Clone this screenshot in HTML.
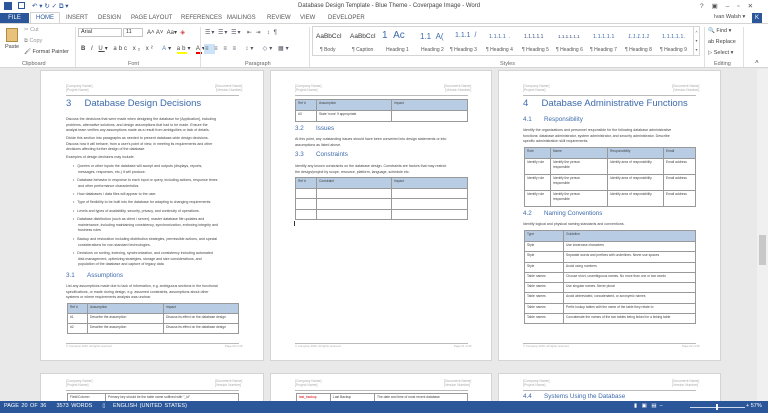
<!DOCTYPE html>
<html><head><meta charset="utf-8"><style>
*{margin:0;padding:0;box-sizing:border-box}
body{width:768px;height:413px;overflow:hidden;position:relative;background:#e9e9e9;font-family:"Liberation Sans",sans-serif;}
.a{position:absolute;white-space:nowrap}
.t{font-size:6.5px;color:#444}
.tab{position:absolute;top:13px;height:10px;font-size:6px;color:#555;line-height:10px}
.lbl{position:absolute;top:61px;font-size:5.5px;color:#666}
.pg{position:absolute;background:#fff;border:1px solid #d4d4d4}
.s{position:absolute;font-size:3.6px;color:#444;white-space:nowrap}
.hd{position:absolute;font-size:3.4px;color:#aaa;white-space:nowrap}
.h1{position:absolute;font-size:9.5px;color:#3d6bab;white-space:nowrap}
.h2{position:absolute;font-size:6.3px;color:#3d6bab;white-space:nowrap}
table{position:absolute;border-collapse:collapse}
td{border:0.7px solid #999;font-size:3.3px;color:#444;padding:1px 2px;vertical-align:top;line-height:4.5px}
tr.h td{background:#b8cce4}
.rule{position:absolute;height:0;border-top:0.7px solid #bbb}
.sep{position:absolute;top:27px;width:1px;height:40px;background:#e0e0e0}
.pv{position:absolute;top:33px;color:#3d6bab;white-space:nowrap}
.sl{position:absolute;top:47px;font-size:5px;color:#555;white-space:nowrap}
</style></head><body>
<div class="a" style="left:0;top:0;width:768px;height:68px;background:#fff;border-bottom:1px solid #d6d6d6"></div>
<div class="a" style="left:4px;top:2px;width:8px;height:8px;background:#2b579a"></div>
<div class="a" style="left:18px;top:2px;width:7px;height:7px;border:1px solid #2b579a"></div>
<div class="a t" style="left:32px;top:2px;color:#2b579a">↶ ▾ ↻ ✓ ⧉ ▾</div>
<div class="a" style="left:298px;top:3px;font-size:6px;color:#444">Database Design Template - Blue Theme - Coverpage Image - Word</div>
<div class="a" style="left:700px;top:2px;font-size:6.5px;color:#555;letter-spacing:8px">?▣–▫✕</div>
<div class="a" style="left:0;top:13px;width:29px;height:10px;background:#2b579a;color:#fff;font-size:6px;text-align:center;line-height:10px">FILE</div>
<div class="a" style="left:30px;top:12px;width:30px;height:12px;border:1px solid #d4d4d4;border-bottom:1px solid #fff;background:#fff;color:#2b579a;font-size:6px;text-align:center;line-height:10px">HOME</div>
<div class="tab" style="left:66px">INSERT</div><div class="tab" style="left:98px">DESIGN</div><div class="tab" style="left:131px">PAGE LAYOUT</div><div class="tab" style="left:181px">REFERENCES</div><div class="tab" style="left:227px">MAILINGS</div><div class="tab" style="left:267px">REVIEW</div><div class="tab" style="left:300px">VIEW</div><div class="tab" style="left:328px">DEVELOPER</div>
<div class="a" style="left:714px;top:14px;font-size:5.5px;color:#444">Ivan Walsh ▾</div>
<div class="a" style="left:752px;top:13px;width:10px;height:10px;background:#2b579a;color:#fff;font-size:6px;text-align:center;line-height:10px">K</div>
<div class="a" style="left:0;top:23px;width:768px;border-top:1px solid #d4d4d4"></div>
<div class="a" style="left:6px;top:28px;width:12px;height:14px;background:#e8c27a;border:1px solid #b08a40"></div>
<div class="a t" style="left:5px;top:44px;font-size:5.5px">Paste</div>
<div class="a t" style="left:24px;top:27px;font-size:5.5px;color:#999">✂ Cut</div>
<div class="a t" style="left:24px;top:38px;font-size:5.5px;color:#999">⧉ Copy</div>
<div class="a t" style="left:24px;top:49px;font-size:5.5px">🖌 Format Painter</div>
<div class="lbl" style="left:22px">Clipboard</div>
<div class="sep" style="left:75px"></div>
<div class="a" style="left:78px;top:28px;width:44px;height:9px;border:1px solid #c6c6c6;font-size:5.5px;padding-left:2px;color:#333">Arial</div>
<div class="a" style="left:123px;top:28px;width:20px;height:9px;border:1px solid #c6c6c6;font-size:5.5px;padding-left:2px;color:#333">11</div>
<div class="a t" style="left:147px;top:29px;font-size:6px">A˄ A˅ &nbsp;Aa▾ &nbsp;<span style="color:#c44">◈</span></div>
<div class="a t" style="left:81px;top:45px;font-size:6px;letter-spacing:2px"><b>B</b> <i>I</i> <u>U</u>▾ abc x₂ x² &nbsp;<span style="color:#4a7fc1">A</span>▾ <span style="border-bottom:2px solid #ff0">ab</span>▾ <span style="border-bottom:2px solid #e00">A</span>▾</div>
<div class="lbl" style="left:128px">Font</div>
<div class="sep" style="left:200px"></div>
<div class="a t" style="left:205px;top:29px;font-size:6px;letter-spacing:1px;color:#556">☰▾ ☰▾ ☰▾ &nbsp;⇤ ⇥ &nbsp;↕ ¶</div>
<div class="a" style="left:204px;top:44px;width:11px;height:10px;background:#cde3f7"></div>
<div class="a t" style="left:205px;top:45px;font-size:6px;letter-spacing:2px;color:#556">≡ ≡ ≡ ≡ &nbsp;↕▾ &nbsp;◇▾ ▦▾</div>
<div class="lbl" style="left:245px">Paragraph</div>
<div class="sep" style="left:309px"></div>
<!-- styles -->
<div class="a" style="left:312px;top:26px;width:388px;height:30px;border:1px solid #d4d4d4;overflow:hidden"></div>
<div class="a" style="left:693px;top:27px;width:6px;height:28px;border-left:1px solid #d4d4d4;font-size:4px;color:#666;line-height:9px;text-align:center">˄<br>▾<br>▾</div>
<div class="pv" style="left:316px;font-size:6.5px;color:#333">AaBbCcI</div><div class="sl" style="left:320px">¶ Body</div>
<div class="pv" style="left:350px;font-size:6.5px;color:#333">AaBbCcI</div><div class="sl" style="left:352px">¶ Caption</div>
<div class="pv" style="left:382px;top:30px;font-size:10px">1 &nbsp;Ac</div><div class="sl" style="left:386px">Heading 1</div>
<div class="pv" style="left:420px;top:32px;font-size:8px">1.1 &nbsp;A(</div><div class="sl" style="left:421px">Heading 2</div>
<div class="pv" style="left:455px;top:32px;font-size:7px">1.1.1 &nbsp;/</div><div class="sl" style="left:450px">¶ Heading 3</div>
<div class="pv" style="left:489px;top:34px;font-size:5.5px">1.1.1.1 &nbsp;.</div><div class="sl" style="left:486px">¶ Heading 4</div>
<div class="pv" style="left:524px;top:34px;font-size:5px;color:#2e4a7a">1.1.1.1.1</div><div class="sl" style="left:522px">¶ Heading 5</div>
<div class="pv" style="left:558px;top:34px;font-size:4.6px;color:#2e4a7a">1.1.1.1.1.1</div><div class="sl" style="left:556px">¶ Heading 6</div>
<div class="pv" style="left:593px;top:34px;font-size:5.5px">1.1.1.1.1</div><div class="sl" style="left:590px">¶ Heading 7</div>
<div class="pv" style="left:628px;top:34px;font-size:5.5px;font-style:italic">1.1.1.1.1</div><div class="sl" style="left:625px">¶ Heading 8</div>
<div class="pv" style="left:662px;top:34px;font-size:5.5px">1.1.1.1.1.</div><div class="sl" style="left:660px">¶ Heading 9</div>
<div class="lbl" style="left:500px">Styles</div>
<div class="sep" style="left:704px"></div>
<div class="a t" style="left:708px;top:28px;font-size:5.5px">🔍 Find ▾</div>
<div class="a t" style="left:708px;top:39px;font-size:5.5px">ab Replace</div>
<div class="a t" style="left:708px;top:50px;font-size:5.5px">▷ Select ▾</div>
<div class="lbl" style="left:714px">Editing</div>
<div class="sep" style="left:743px"></div>
<div class="a t" style="left:755px;top:59px">˄</div>
<div class="a" style="left:757px;top:69px;width:11px;height:332px;background:#f0f0f0"></div>
<div class="a" style="left:759px;top:235px;width:7px;height:30px;background:#c8c8c8"></div>

<!-- PAGE 1 -->
<div class="pg" style="left:40px;top:70px;width:224px;height:291px"></div>
<div class="hd" style="left:66px;top:84px">[Company Name]<br>[Project Name]</div>
<div class="hd" style="left:215px;top:84px;text-align:right">[Document Name]<br>[Version Number]</div>
<div class="rule" style="left:66px;top:95px;width:173px"></div>
<div class="h1" style="left:66px;top:98px">3&nbsp;&nbsp;&nbsp;&nbsp;&nbsp;Database Design Decisions</div>
<div class="s" style="left:66px;top:117px;line-height:5.5px">Discuss the decisions that were made when designing the database for [Application], including<br>problems, alternative solutions, and design assumptions that had to be made. Ensure the<br>analyst team verifies any assumptions made as a result from ambiguities or lack of details.</div>
<div class="s" style="left:66px;top:136px;line-height:5.5px">Divide this section into paragraphs as needed to present database-wide design decisions.<br>Discuss how it will behave, from a user's point of view, in meeting its requirements and other<br>decisions affecting further design of the database.</div>
<div class="s" style="left:66px;top:155px">Examples of design decisions may include:</div>
<div class="s" style="left:73px;top:164px;line-height:5.5px">•&nbsp;&nbsp;&nbsp;Queries or other inputs the database will accept and outputs (displays, reports,<br>&nbsp;&nbsp;&nbsp;&nbsp;&nbsp;messages, responses, etc.) it will produce.</div>
<div class="s" style="left:73px;top:178px;line-height:5.5px">•&nbsp;&nbsp;&nbsp;Database behavior in response to each input or query, including actions, response times<br>&nbsp;&nbsp;&nbsp;&nbsp;&nbsp;and other performance characteristics.</div>
<div class="s" style="left:73px;top:192px">•&nbsp;&nbsp;&nbsp;How databases / data files will appear to the user.</div>
<div class="s" style="left:73px;top:200px">•&nbsp;&nbsp;&nbsp;Type of flexibility to be built into the database for adapting to changing requirements.</div>
<div class="s" style="left:73px;top:209px">•&nbsp;&nbsp;&nbsp;Levels and types of availability, security, privacy, and continuity of operations.</div>
<div class="s" style="left:73px;top:217px;line-height:5.5px">•&nbsp;&nbsp;&nbsp;Database distribution (such as client / server), master database file updates and<br>&nbsp;&nbsp;&nbsp;&nbsp;&nbsp;maintenance, including maintaining consistency, synchronization, enforcing integrity and<br>&nbsp;&nbsp;&nbsp;&nbsp;&nbsp;business rules</div>
<div class="s" style="left:73px;top:237px;line-height:5.5px">•&nbsp;&nbsp;&nbsp;Backup and restoration including distribution strategies, permissible actions, and special<br>&nbsp;&nbsp;&nbsp;&nbsp;&nbsp;considerations for non-standard technologies.</div>
<div class="s" style="left:73px;top:251px;line-height:5.5px">•&nbsp;&nbsp;&nbsp;Decisions on sorting, indexing, synchronization, and consistency including automated<br>&nbsp;&nbsp;&nbsp;&nbsp;&nbsp;disk management, optimizing strategies, storage and size considerations, and<br>&nbsp;&nbsp;&nbsp;&nbsp;&nbsp;population of the database and capture of legacy data</div>
<div class="h2" style="left:66px;top:272px">3.1&nbsp;&nbsp;&nbsp;&nbsp;&nbsp;&nbsp;&nbsp;Assumptions</div>
<div class="s" style="left:66px;top:284px;line-height:5.5px">List any assumptions made due to lack of information, e.g. ambiguous sections in the functional<br>specifications, or made during design, e.g. assumed constraints, assumptions about other<br>systems or where requirements analysis was unclear.</div>
<table style="left:67px;top:303px;width:172px">
<tr class="h" style="height:10px"><td style="width:20px">Ref #</td><td style="width:76px">Assumption</td><td>Impact</td></tr>
<tr style="height:10px"><td>#1</td><td>Describe the assumption</td><td>Discuss its effect on the database design</td></tr>
<tr style="height:10px"><td>#2</td><td>Describe the assumption</td><td>Discuss its effect on the database design</td></tr></table>
<div class="rule" style="left:66px;top:343px;width:173px"></div>
<div class="hd" style="left:66px;top:344px;font-size:2.8px">© Company 2016. All rights reserved.</div>
<div class="hd" style="left:225px;top:344px;font-size:2.8px">Page 20 of 36</div>

<!-- PAGE 2 -->
<div class="pg" style="left:270px;top:70px;width:222px;height:291px"></div>
<div class="hd" style="left:295px;top:84px">[Company Name]<br>[Project Name]</div>
<div class="hd" style="left:444px;top:84px;text-align:right">[Document Name]<br>[Version Number]</div>
<div class="rule" style="left:295px;top:95px;width:173px"></div>
<table style="left:295px;top:99px;width:173px">
<tr class="h" style="height:11px"><td style="width:21px">Ref #</td><td style="width:75px">Assumption</td><td>Impact</td></tr>
<tr style="height:11px"><td>#3</td><td>State 'none' if appropriate</td><td></td></tr></table>
<div class="h2" style="left:295px;top:125px">3.2&nbsp;&nbsp;&nbsp;&nbsp;&nbsp;&nbsp;&nbsp;Issues</div>
<div class="s" style="left:295px;top:137px;line-height:5.5px">At this point, any outstanding issues should have been converted into design statements or into<br>assumptions as listed above.</div>
<div class="h2" style="left:295px;top:151px">3.3&nbsp;&nbsp;&nbsp;&nbsp;&nbsp;&nbsp;&nbsp;Constraints</div>
<div class="s" style="left:295px;top:164px;line-height:5.5px">Identify any known constraints on the database design. Constraints are factors that may restrict<br>the design/project by scope, resource, platform, language, schedule etc.</div>
<table style="left:295px;top:177px;width:173px">
<tr class="h" style="height:11px"><td style="width:21px">Ref #</td><td style="width:75px">Constraint</td><td>Impact</td></tr>
<tr style="height:10.3px"><td></td><td></td><td></td></tr><tr style="height:10.3px"><td></td><td></td><td></td></tr><tr style="height:10.3px"><td></td><td></td><td></td></tr></table>
<div class="a" style="left:294px;top:221px;width:0.7px;height:5px;background:#333"></div>
<div class="rule" style="left:295px;top:343px;width:173px"></div>
<div class="hd" style="left:295px;top:344px;font-size:2.8px">© Company 2016. All rights reserved.</div>
<div class="hd" style="left:454px;top:344px;font-size:2.8px">Page 21 of 36</div>

<!-- PAGE 3 -->
<div class="pg" style="left:498px;top:70px;width:223px;height:291px"></div>
<div class="hd" style="left:523px;top:84px">[Company Name]<br>[Project Name]</div>
<div class="hd" style="left:672px;top:84px;text-align:right">[Document Name]<br>[Version Number]</div>
<div class="rule" style="left:523px;top:95px;width:173px"></div>
<div class="h1" style="left:523px;top:98px">4&nbsp;&nbsp;&nbsp;&nbsp;&nbsp;Database Administrative Functions</div>
<div class="h2" style="left:523px;top:116px">4.1&nbsp;&nbsp;&nbsp;&nbsp;&nbsp;&nbsp;&nbsp;Responsibility</div>
<div class="s" style="left:523px;top:128px;line-height:5.5px">Identify the organizations and personnel responsible for the following database administrative<br>functions: database administrator, system administrator, and security administrator.  Describe<br>specific administration skill requirements.</div>
<table style="left:524px;top:147px;width:172px">
<tr class="h" style="height:11px"><td style="width:26px">Role</td><td style="width:57px">Name</td><td style="width:56px">Responsibility</td><td>Email</td></tr>
<tr style="height:16px"><td>Identify role</td><td>Identify the person<br>responsible</td><td>Identify area of responsibility</td><td>Email address</td></tr>
<tr style="height:16px"><td>Identify role</td><td>Identify the person<br>responsible</td><td>Identify area of responsibility</td><td>Email address</td></tr>
<tr style="height:16px"><td>Identify role</td><td>Identify the person<br>responsible</td><td>Identify area of responsibility</td><td>Email address</td></tr></table>
<div class="h2" style="left:523px;top:210px">4.2&nbsp;&nbsp;&nbsp;&nbsp;&nbsp;&nbsp;&nbsp;Naming Conventions</div>
<div class="s" style="left:523px;top:222px">Identify logical and physical naming standards and conventions.</div>
<table style="left:524px;top:230px;width:172px">
<tr class="h" style="height:11px"><td style="width:39px">Type</td><td>Guideline</td></tr>
<tr style="height:10.3px"><td>Style</td><td>Use lowercase characters</td></tr>
<tr style="height:10.3px"><td>Style</td><td>Separate words and prefixes with underlines. Never use spaces</td></tr>
<tr style="height:10.3px"><td>Style</td><td>Avoid using numbers</td></tr>
<tr style="height:10.3px"><td>Table names</td><td>Choose short, unambiguous names. No more than one or two words</td></tr>
<tr style="height:10.3px"><td>Table names</td><td>Use singular names. Never plural</td></tr>
<tr style="height:10.3px"><td>Table names</td><td>Avoid abbreviated, concatenated, or acronymic names</td></tr>
<tr style="height:10.3px"><td>Table names</td><td>Prefix lookup tables with the name of the table they relate to</td></tr>
<tr style="height:10.3px"><td>Table names</td><td>Concatenate the names of the two tables being linked for a linking table</td></tr></table>
<div class="rule" style="left:523px;top:343px;width:173px"></div>
<div class="hd" style="left:523px;top:344px;font-size:2.8px">© Company 2016. All rights reserved.</div>
<div class="hd" style="left:682px;top:344px;font-size:2.8px">Page 22 of 36</div>

<!-- ROW 2 -->
<div class="pg" style="left:40px;top:373px;width:224px;height:40px"></div>
<div class="hd" style="left:66px;top:379px">[Company Name]<br>[Project Name]</div>
<div class="hd" style="left:215px;top:379px">[Document Name]<br>[Version Number]</div>
<div class="rule" style="left:66px;top:390px;width:173px"></div>
<table style="left:67px;top:393px;width:172px"><tr style="height:10px"><td style="width:38px">Field/Column</td><td>Primary key should be the table name suffixed with "_id"</td></tr></table>
<div class="pg" style="left:270px;top:373px;width:222px;height:40px"></div>
<div class="hd" style="left:295px;top:379px">[Company Name]<br>[Project Name]</div>
<div class="hd" style="left:444px;top:379px">[Document Name]<br>[Version Number]</div>
<div class="rule" style="left:295px;top:390px;width:173px"></div>
<table style="left:296px;top:393px;width:172px"><tr style="height:10px"><td style="width:34px;color:#c00">last_backup</td><td style="width:44px">Last Backup</td><td>The date and time of most recent database</td></tr></table>
<div class="pg" style="left:498px;top:373px;width:223px;height:40px"></div>
<div class="hd" style="left:523px;top:379px">[Company Name]<br>[Project Name]</div>
<div class="hd" style="left:672px;top:379px">[Document Name]<br>[Version Number]</div>
<div class="rule" style="left:523px;top:390px;width:173px"></div>
<div class="h2" style="left:523px;top:393px">4.4&nbsp;&nbsp;&nbsp;&nbsp;&nbsp;&nbsp;&nbsp;Systems Using the Database</div>

<div class="a" style="left:0;top:401px;width:768px;height:12px;background:#2b579a"></div>
<div class="a" style="left:4px;top:403px;font-size:5.5px;color:#fff;word-spacing:1px">PAGE 20 OF 36 &nbsp;&nbsp;&nbsp;3573 WORDS &nbsp;&nbsp;&nbsp;▯ &nbsp;&nbsp;ENGLISH (UNITED STATES)</div>
<div class="a" style="left:634px;top:403px;font-size:5.5px;color:#fff">▮ &nbsp;&nbsp;▣ &nbsp;&nbsp;▤ &nbsp;–</div>
<div class="a" style="left:690px;top:407px;width:55px;height:1px;background:#cfd9ea"></div>
<div class="a" style="left:716px;top:404px;width:2px;height:6px;background:#fff"></div>
<div class="a" style="left:746px;top:403px;font-size:5.5px;color:#fff">+ 57%</div>
</body></html>
